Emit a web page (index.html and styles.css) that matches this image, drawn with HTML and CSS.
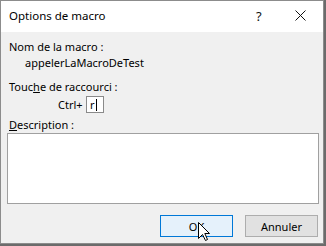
FILE: index.html
```html
<!DOCTYPE html>
<html>
<head>
<meta charset="utf-8">
<link rel="stylesheet" href="styles.css">
</head>
<body>
<div class="window">
  <div class="titlebar">
    <span class="title">Options de macro</span>
    <span class="help">?</span>
    <span class="close">
      <svg width="11" height="11" viewBox="0 0 11 11"><path d="M0.5 0.5 L10.5 10.5 M10.5 0.5 L0.5 10.5" stroke="#111" stroke-width="1" fill="none"/></svg>
    </span>
  </div>
  <div class="content">
    <div class="label first">Nom de la macro :</div>
    <div class="name">appelerLaMacroDeTest</div>
    <div class="label touche">Touc<u>h</u>e de raccourci :</div>
    <div class="ctrlrow">
      <span class="ctrl">Ctrl+</span>
      <span class="keybox">r<span class="caret"></span></span>
    </div>
    <div class="label desc"><u>D</u>escription :</div>
    <div class="textarea"></div>
    <div class="buttons">
      <div class="btn ok">OK</div>
      <div class="btn cancel">Annuler</div>
    </div>
    <svg class="cursor" width="13" height="20" viewBox="0 0 13 20"><path d="M0.5 0.5 L0.5 16.5 L4.5 12.5 L7.5 18.5 L9.5 17.5 L6.8 11.5 L11.5 11.5 Z" fill="#fff" stroke="#000" stroke-width="1" stroke-linejoin="miter"/></svg>
  </div>
</div>
</body>
</html>
```
FILE: styles.css
```css
html, body {
  margin: 0;
  padding: 0;
}
body {
  background: #6b6b6b;
  width: 326px;
  height: 246px;
  overflow: hidden;
  font-family: "Noto Sans", "DejaVu Sans", sans-serif;
  font-size: 11px;
  color: #000;
}
.window {
  width: 322px;
  height: 242px;
  border: 1px solid #8c8c8c;
  background: #f0f0f0;
  display: flex;
  flex-direction: column;
}
.titlebar {
  height: 31px;
  background: #fff;
  display: flex;
  align-items: center;
}
.title {
  padding-left: 8px;
  flex: 1;
  font-size: 11.5px;
  position: relative;
  top: -1px;
}
.help {
  width: 20px;
  font-size: 13px;
  margin-right: 19px;
  color: #111;
  position: relative;
  top: -1px;
}
.close {
  width: 24px;
  margin-right: 4px;
  display: flex;
  position: relative;
  top: -1px;
}
.content {
  position: relative;
  flex: 1;
  padding: 7px 4px 0 6px;
}
.label {
  line-height: 15px;
  padding-left: 2px;
}
.name {
  line-height: 15px;
  padding-left: 18px;
  margin-top: 1px;
}
.touche {
  margin-top: 9px;
}
.ctrlrow {
  margin-top: 2px;
  display: flex;
  align-items: center;
  height: 17px;
}
.ctrl {
  margin-left: 51px;
  width: 28px;
}
.keybox {
  box-sizing: border-box;
  width: 18px;
  height: 17px;
  border: 1px solid #8a8a8a;
  background: #fff;
  line-height: 14px;
  padding-left: 3px;
  display: flex;
  align-items: center;
}
.caret {
  display: inline-block;
  width: 1px;
  height: 12px;
  background: #000;
  margin-left: 1px;
}
.desc {
  margin-top: 4px;
}
.textarea {
  margin-top: 1px;
  box-sizing: border-box;
  width: 312px;
  height: 71px;
  background: #fff;
  border: 1px solid #a0a0a0;
}
.buttons {
  margin-top: 11px;
  display: flex;
  justify-content: flex-end;
  gap: 12px;
  width: 311px;
}
.btn {
  box-sizing: border-box;
  width: 73px;
  height: 22px;
  display: flex;
  align-items: center;
  justify-content: center;
}
.ok {
  background: #e5f1fb;
  border: 1px solid #0078d7;
}
.cancel {
  background: #e1e1e1;
  border: 1px solid #adadad;
}
.cursor {
  position: absolute;
  left: 197px;
  top: 190px;
}
```
